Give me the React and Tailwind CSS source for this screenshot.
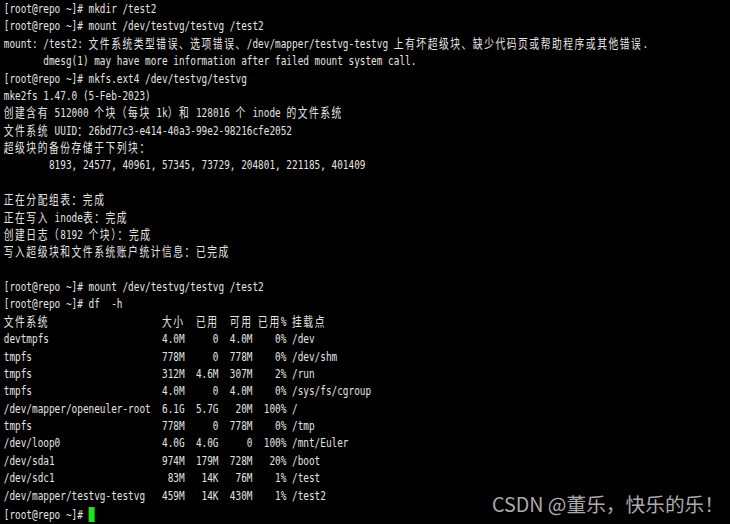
const prompt = '[root@repo ~]# ';

const df = (fs, size, used, avail, pct, mnt) =>
  fs.padEnd(27) +
  ' ' +
  size.padStart(4) +
  ' ' +
  used.padStart(5) +
  ' ' +
  avail.padStart(5) +
  ' ' +
  pct.padStart(5) +
  ' ' +
  mnt;

const lines = [
  prompt + 'mkdir /test2',
  prompt + 'mount /dev/testvg/testvg /test2',
  'mount: /test2: 文件系统类型错误、选项错误、/dev/mapper/testvg-testvg 上有坏超级块、缺少代码页或帮助程序或其他错误.',
  '       dmesg(1) may have more information after failed mount system call.',
  prompt + 'mkfs.ext4 /dev/testvg/testvg',
  'mke2fs 1.47.0 (5-Feb-2023)',
  '创建含有 512000 个块（每块 1k）和 128016 个 inode 的文件系统',
  '文件系统 UUID：26bd77c3-e414-40a3-99e2-98216cfe2052',
  '超级块的备份存储于下列块：',
  '        8193, 24577, 40961, 57345, 73729, 204801, 221185, 401409',
  '',
  '正在分配组表：完成',
  '正在写入 inode表：完成',
  '创建日志（8192 个块）：完成',
  '写入超级块和文件系统账户统计信息：已完成',
  '',
  prompt + 'mount /dev/testvg/testvg /test2',
  prompt + 'df  -h',
  '文件系统' + ' '.repeat(20) + '大小  已用  可用 已用% 挂载点',
  df('devtmpfs', '4.0M', '0', '4.0M', '0%', '/dev'),
  df('tmpfs', '778M', '0', '778M', '0%', '/dev/shm'),
  df('tmpfs', '312M', '4.6M', '307M', '2%', '/run'),
  df('tmpfs', '4.0M', '0', '4.0M', '0%', '/sys/fs/cgroup'),
  df('/dev/mapper/openeuler-root', '6.1G', '5.7G', '20M', '100%', '/'),
  df('tmpfs', '778M', '0', '778M', '0%', '/tmp'),
  df('/dev/loop0', '4.0G', '4.0G', '0', '100%', '/mnt/Euler'),
  df('/dev/sda1', '974M', '179M', '728M', '20%', '/boot'),
  df('/dev/sdc1', '83M', '14K', '76M', '1%', '/test'),
  df('/dev/mapper/testvg-testvg', '459M', '14K', '430M', '1%', '/test2'),
];

// wide chars take two terminal cells
const WIDE = /([\u3000-\u303f\u4e00-\u9fff\uff00-\uffef]+)/;

function Line({ text, children }) {
  const parts = text.split(WIDE);
  return (
    <div className="h-[17.38px] whitespace-pre">
      {parts.map((p, i) =>
        i % 2 === 1 ? (
          <span key={i} className="text-[13px] tracking-[2.05px]">
            {p}
          </span>
        ) : (
          p
        )
      )}
      {children}
    </div>
  );
}

export default function App() {
  return (
    <div className="relative h-[524px] w-[730px] overflow-hidden bg-black">
      <div className="w-[980px] origin-top-left scale-x-[0.751] pl-[5px] font-['DejaVu_Sans_Mono','Noto_Sans_CJK_SC',monospace] text-[12.5px] leading-[17.38px] text-[#e4e4e4]">
        {lines.map((l, i) => (
          <Line key={i} text={l} />
        ))}
        <Line text={prompt}>
          <span className="inline-block h-[15px] w-[8px] translate-y-[3px] bg-[#19e619]" />
        </Line>
      </div>

      {/* watermark */}
      <div className="absolute right-[6px] top-[494px] font-['Noto_Sans_CJK_SC',sans-serif] text-[19.7px] leading-[20px] text-[#ababab]">
        CSDN @董乐，快乐的乐！
      </div>
    </div>
  );
}
